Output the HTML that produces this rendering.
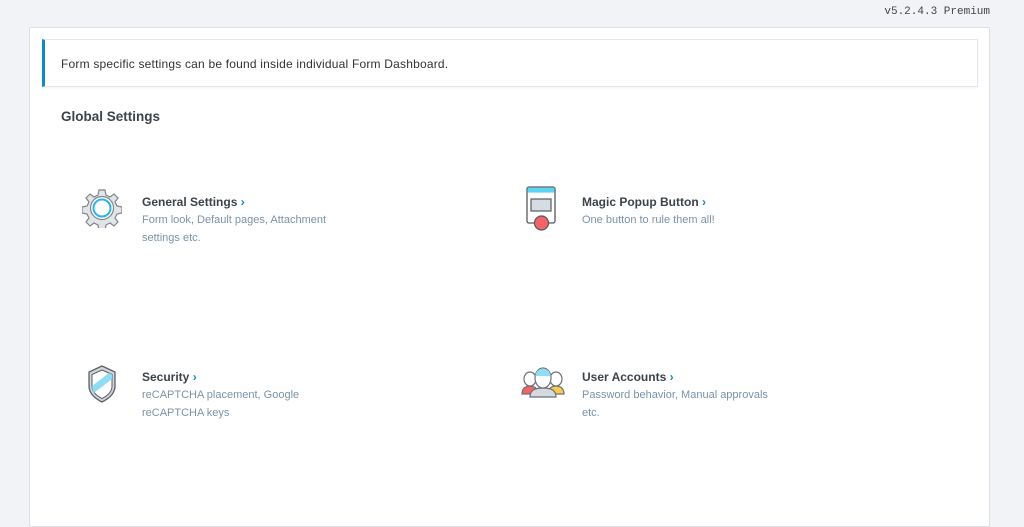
<!DOCTYPE html>
<html><head><meta charset="utf-8"><style>
*{margin:0;padding:0;box-sizing:border-box}
body{width:1024px;height:522px;background:#f1f3f6;font-family:"Liberation Sans",sans-serif;position:relative;overflow:hidden}
.ver{position:absolute;right:34px;top:6px;font:11px "Liberation Mono",monospace;color:#444}
.panel{position:absolute;left:29px;top:27px;width:961px;height:500px;background:#fff;border:1px solid #dde1e6;border-radius:2px}
.notice{position:absolute;left:12px;top:11px;width:936px;height:48px;border:1px solid #e3e6ea;border-left:3px solid #0f8ac4;box-shadow:0 1px 2px rgba(0,0,0,.05);font-size:12px;color:#333;padding:17px 0 0 16px;letter-spacing:.2px}
h2{position:absolute;left:31px;top:81px;font-size:13.5px;font-weight:bold;color:#3c434a}
.t{position:absolute;font-size:12px;font-weight:bold;color:#3c434a;white-space:nowrap}
.t b{color:#0f8ac4;font-weight:bold}
.d{position:absolute;font-size:11px;color:#7a93a8;line-height:18px;width:196px}
</style></head><body>
<div class="ver">v5.2.4.3 Premium</div>
<div class="panel">
<div class="notice">Form specific settings can be found inside individual Form Dashboard.</div>
<h2>Global Settings</h2>
</div>

<svg style="position:absolute;left:82px;top:188px" width="40" height="40" viewBox="0 0 40 40">
<path d="M17,2h6l1,5 4,2 4-3 4,4-3,4 2,4 5,1v6l-5,1-2,4 3,4-4,4-4-3-4,2-1,5h-6l-1-5-4-2-4,3-4-4 3-4-2-4-5-1v-6l5-1 2-4-3-4 4-4 4,3 4-2z" fill="#e2e5e8" stroke="#80858b" stroke-width="1.2"/>
<circle cx="20" cy="20" r="11.5" fill="#fff" stroke="#80858b" stroke-width="1.2"/>
<circle cx="20" cy="20" r="8.5" fill="none" stroke="#29b6e6" stroke-width="2"/>
</svg>
<div class="t" style="left:142px;top:195px">General Settings <b>›</b></div>
<div class="d" style="left:142px;top:211px">Form look, Default pages, Attachment settings etc.</div>

<svg style="position:absolute;left:526px;top:186px" width="32" height="46" viewBox="0 0 32 46">
<rect x="1" y="1" width="28" height="36" rx="2" fill="#fff" stroke="#555a60" stroke-width="1.3"/>
<rect x="1.6" y="1.6" width="26.8" height="5" fill="#5fd3f3"/>
<rect x="5" y="13" width="20" height="12" fill="#d5dde3" stroke="#555a60" stroke-width="1.2"/>
<circle cx="15.5" cy="37" r="7" fill="#f26466" stroke="#555a60" stroke-width="1.2"/>
</svg>
<div class="t" style="left:582px;top:195px">Magic Popup Button <b>›</b></div>
<div class="d" style="left:582px;top:211px">One button to rule them all!</div>

<svg style="position:absolute;left:85px;top:364px" width="34" height="40" viewBox="0 0 34 40">
<path d="M17,2 L30,8 L30,22 C30,30 23,35 17,38 C11,35 4,30 4,22 L4,8 Z" fill="#cfd4d8" stroke="#5c6168" stroke-width="1.3"/>
<path d="M17,6 L27,10.5 L27,22 C27,28 22,32 17,34.5 C12,32 7,28 7,22 L7,10.5 Z" fill="#fff" stroke="#5c6168" stroke-width="1"/>
<path d="M7,22 L24,9 L27,10.5 L27,15 L9,29 C8,27 7,25 7,22Z" fill="#8fdcf3"/>
</svg>
<div class="t" style="left:142px;top:370px">Security <b>›</b></div>
<div class="d" style="left:142px;top:386px">reCAPTCHA placement, Google reCAPTCHA keys</div>

<svg style="position:absolute;left:520px;top:367px" width="46" height="32" viewBox="0 0 46 32">
<g stroke="#6b7077" stroke-width="1.2">
<path d="M2,27 C2,21 6,19 10,19 C14,19 18,21 18,27Z" fill="#f26466"/>
<ellipse cx="10" cy="12" rx="6" ry="7" fill="#fff"/>
<path d="M28,27 C28,21 32,19 36,19 C40,19 44,21 44,27Z" fill="#f7cb4d"/>
<ellipse cx="36" cy="12" rx="6" ry="7" fill="#fff"/>
<path d="M10,30 C10,23 15,21 23,21 C31,21 36,23 36,30Z" fill="#d6d9dd"/>
<ellipse cx="23" cy="11" rx="8" ry="10" fill="#fff"/>
<path d="M15.3,9 C16,4 19,1.6 23,1.6 C27,1.6 30,4 30.7,9Z" fill="#8fdcf3" stroke="none"/>
</g>
</svg>
<div class="t" style="left:582px;top:370px">User Accounts <b>›</b></div>
<div class="d" style="left:582px;top:386px">Password behavior, Manual approvals etc.</div>
</body></html>
